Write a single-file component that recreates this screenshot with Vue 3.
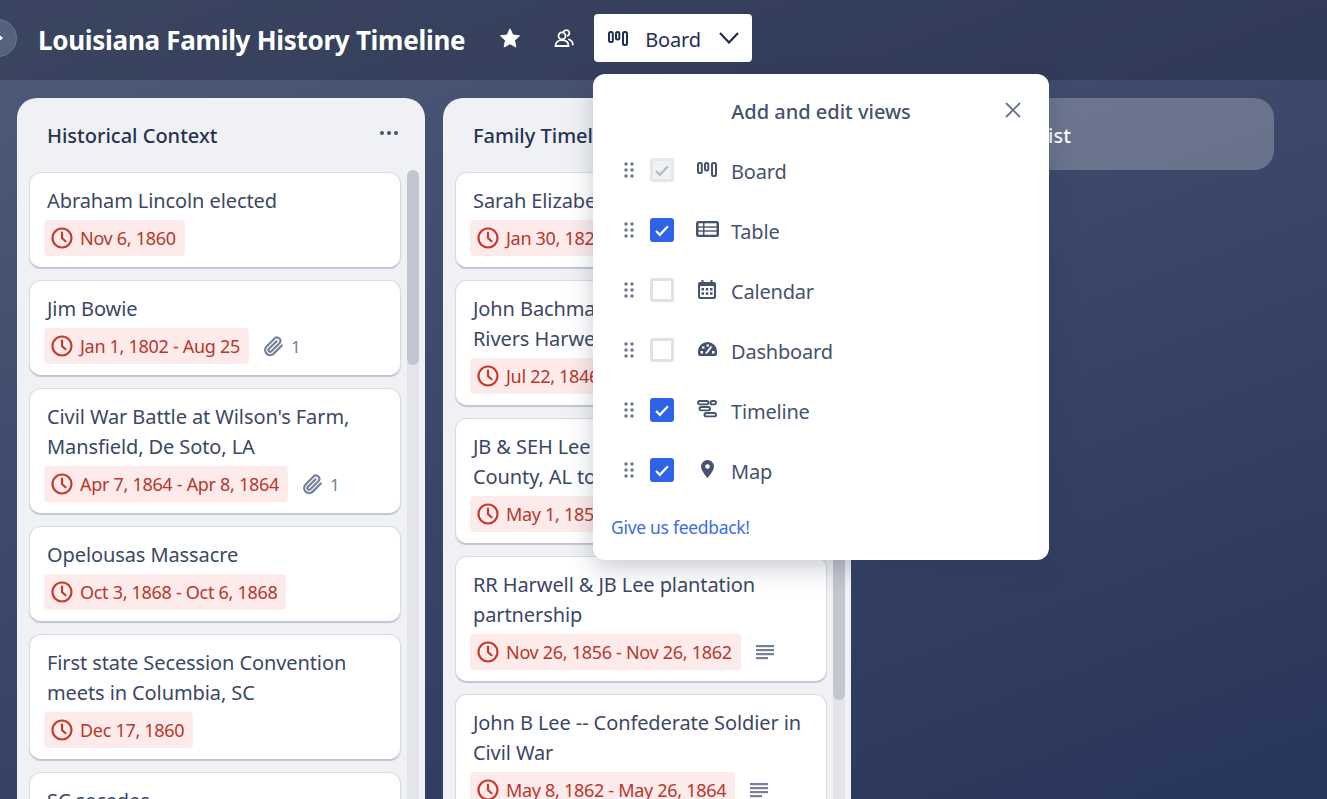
<script setup>
const clock = 'M12 2.500a9.500 9.500 0 1 0 0 19 9.500 9.500 0 0 0 0-19Z M12 6.500V12l3.500 3.200'
const col1 = [
  { t: ['Abraham Lincoln elected'], d: 'Nov 6, 1860' },
  { t: ['Jim Bowie'], d: 'Jan 1, 1802 - Aug 25', clip: 1 },
  { t: ["Civil War Battle at Wilson's Farm,", 'Mansfield, De Soto, LA'], d: 'Apr 7, 1864 - Apr 8, 1864', clip: 1 },
  { t: ['Opelousas Massacre'], d: 'Oct 3, 1868 - Oct 6, 1868' },
  { t: ['First state Secession Convention', 'meets in Columbia, SC'], d: 'Dec 17, 1860' },
  { t: ['SC secedes'], d: 'Dec 20, 1860' }
]
const col2 = [
  { t: ['Sarah Elizabeth Rivers born'], d: 'Jan 30, 1825' },
  { t: ['John Bachman Lee marries Sarah', 'Rivers Harwell'], d: 'Jul 22, 1846' },
  { t: ['JB & SEH Lee move from Madison', 'County, AL to Louisiana'], d: 'May 1, 1850' },
  { t: ['RR Harwell & JB Lee plantation', 'partnership'], d: 'Nov 26, 1856 - Nov 26, 1862', note: 1 },
  { t: ['John B Lee -- Confederate Soldier in', 'Civil War'], d: 'May 8, 1862 - May 26, 1864', note: 1 }
]
const lists = [
  { title: 'Historical Context', cards: col1, thumb: 195 },
  { title: 'Family Timeline', cards: col2, thumb: 530 }
]
const views = [
  { n: 'Board', c: 'locked' },
  { n: 'Table', c: 'on' },
  { n: 'Calendar', c: 'off' },
  { n: 'Dashboard', c: 'off' },
  { n: 'Timeline', c: 'on' },
  { n: 'Map', c: 'on' }
]
</script>

<template>
  <div class="page">
    <header class="top">
      <span class="toggle">
        <svg width="10" height="10" viewBox="0 0 10 10"><path d="M4 1l5 4-5 4z" fill="#fff" stroke="#fff" stroke-width="1.500" stroke-linejoin="round" /></svg>
      </span>
      <h1>Louisiana Family History Timeline</h1>
      <svg class="star" width="22" height="22" viewBox="0 0 24 24"><path fill="#fff" stroke="#fff" stroke-width="1" stroke-linejoin="round" d="M12 2l3.100 6.700 7.300.9-5.400 5 1.400 7.300-6.400-3.600-6.400 3.600 1.400-7.300-5.400-5 7.300-.9z" /></svg>
      <svg class="people" width="20" height="18" viewBox="0 0 20 18" fill="none" stroke="#fff" stroke-width="1.800" stroke-linecap="round"><circle cx="8" cy="6.800" r="3.500" /><path d="M1.500 17c0-3.800 2.800-5.800 6.500-5.800s6.500 2 6.500 5.800z" /><path d="M9.500 2.500C11 .6 14 .6 15 2.600c.7 1.600.1 3.300-1.300 4.200M15 10.500c2.200.8 3.800 2.500 3.800 5" /></svg>
      <button class="viewbtn">
        <svg width="20" height="15" viewBox="0 0 20 15" fill="none" stroke="#222f55" stroke-width="2"><rect x="1" y="1" width="3.800" height="10" rx="1.500" /><rect x="8" y="1" width="3.300" height="7.500" rx="1.500" /><rect x="15" y="1" width="4" height="13" rx="1.500" /></svg>
        <span>Board</span>
        <svg class="chev" width="20" height="12" viewBox="0 0 20 12"><path d="M1 1l9 9.500L19 1" fill="none" stroke="#222f55" stroke-width="2.200" /></svg>
      </button>
    </header>

    <main class="board">
      <section v-for="l in lists" :key="l.title" class="list">
        <div class="list-head">
          <h2>{{ l.title }}</h2>
          <svg width="20" height="6" viewBox="0 0 20 6" fill="#47526f"><circle cx="3" cy="3" r="2" /><circle cx="10" cy="3" r="2" /><circle cx="17" cy="3" r="2" /></svg>
        </div>
        <div class="cards">
          <article v-for="c in l.cards" :key="c.t[0]" class="card">
            <p class="ctitle"><span v-for="line in c.t" :key="line" class="line">{{ line }}</span></p>
            <div class="meta">
              <span class="due">
                <svg width="24" height="24" viewBox="0 0 24 24" fill="none" stroke="#c53a2e" stroke-width="2.200" stroke-linecap="round"><path :d="clock" /></svg>
                {{ c.d }}
              </span>
              <span v-if="c.clip" class="clip">
                <svg width="22" height="22" viewBox="0 0 24 24" fill="none" stroke="#77809a" stroke-width="2.400" stroke-linecap="round"><path d="M20.500 11.500l-8.800 8.800a5.500 5.500 0 0 1-7.800-7.800l9-9a3.700 3.700 0 0 1 5.200 5.200l-9 9a1.800 1.800 0 0 1-2.600-2.600l8.300-8.300" /></svg>
                <span>1</span>
              </span>
              <svg v-if="c.note" class="note" width="20" height="16" viewBox="0 0 20 16" fill="#77809a"><rect x="1" y="1" width="18" height="2.200" /><rect x="1" y="5" width="18" height="2.200" /><rect x="1" y="9" width="18" height="2.200" /><rect x="1" y="13" width="12" height="2.200" /></svg>
            </div>
          </article>
        </div>
        <span class="track"><span class="thumb" :style="{ height: l.thumb + 'px' }"></span></span>
      </section>
      <div class="addlist">Add another list</div>
    </main>

    <aside class="pop">
      <div class="pop-head">
        <h3>Add and edit views</h3>
        <svg class="close" width="16" height="16" viewBox="0 0 16 16"><path d="M1 1l14 14M15 1L1 15" stroke="#68728c" stroke-width="1.800" fill="none" /></svg>
      </div>
      <ul class="rows">
        <li v-for="v in views" :key="v.n" class="row">
          <svg class="grip" width="10" height="16" viewBox="0 0 10 16" fill="#6b7590"><circle cx="2" cy="2" r="1.700" /><circle cx="8" cy="2" r="1.700" /><circle cx="2" cy="8" r="1.700" /><circle cx="8" cy="8" r="1.700" /><circle cx="2" cy="14" r="1.700" /><circle cx="8" cy="14" r="1.700" /></svg>
          <span class="box" :class="v.c">
            <svg v-if="v.c !== 'off'" width="16" height="13" viewBox="0 0 14 12"><path d="M1.500 6.500l3.500 3.500 7.500-8" fill="none" :stroke="v.c === 'on' ? '#fff' : '#b4b9c7'" stroke-width="2" /></svg>
          </span>
          <span class="vicon">
            <svg v-if="v.n === 'Board'" width="22" height="15" viewBox="0 0 22 15" fill="none" stroke="#47526f" stroke-width="2"><rect x="2" y="1" width="3.800" height="10" rx="1.500" /><rect x="9" y="1" width="3.300" height="7.500" rx="1.500" /><rect x="16" y="1" width="4" height="13" rx="1.500" /></svg>
            <svg v-else-if="v.n === 'Table'" width="23" height="16" viewBox="0 0 23 16"><rect width="23" height="16" rx="2.500" fill="#47526f" /><g fill="#fff"><rect x="2.500" y="2.300" width="4.500" height="3" /><rect x="8.500" y="2.300" width="12" height="3" /><rect x="2.500" y="6.700" width="4.500" height="2.600" /><rect x="8.500" y="6.700" width="12" height="2.600" /><rect x="2.500" y="10.700" width="4.500" height="3" /><rect x="8.500" y="10.700" width="12" height="3" /></g></svg>
            <svg v-else-if="v.n === 'Calendar'" width="18" height="19" viewBox="0 0 18 19"><path d="M3.500 0h2v2h7V0h2v2H16a2 2 0 0 1 2 2v13a2 2 0 0 1-2 2H2a2 2 0 0 1-2-2V4a2 2 0 0 1 2-2h1.500z" fill="#47526f" /><rect x="2" y="6" width="14" height="11" rx="1" fill="#fff" /><g fill="#47526f"><rect x="3.500" y="8" width="2.500" height="2.500" /><rect x="7.800" y="8" width="2.500" height="2.500" /><rect x="12" y="8" width="2.500" height="2.500" /><rect x="3.500" y="12.300" width="2.500" height="2.500" /><rect x="7.800" y="12.300" width="2.500" height="2.500" /><rect x="12" y="12.300" width="2.500" height="2.500" /></g></svg>
            <svg v-else-if="v.n === 'Dashboard'" width="19" height="14" viewBox="0 0 19 14"><path d="M9.500 0A9.500 9.500 0 0 1 19 9.500V12a2 2 0 0 1-2 2H2a2 2 0 0 1-2-2V9.500A9.500 9.500 0 0 1 9.500 0z" fill="#47526f" /><path d="M4 4.500h2.500v2H4zM8.500 2.500H11v2H8.500zM2.500 9h2.500v2.500H2.500zM14 9h2.500v2.500H14z" fill="#fff" /><path d="M8 11.500L13.500 4.500" stroke="#fff" stroke-width="2" /></svg>
            <svg v-else-if="v.n === 'Timeline'" width="20" height="18" viewBox="0 0 20 18" fill="none" stroke="#47526f" stroke-width="1.900"><rect x="1" y="1" width="10.500" height="3.400" rx="1.700" /><rect x="13.500" y="1" width="5.500" height="3.400" rx="1.700" /><rect x="2.500" y="7" width="10.500" height="3.400" rx="1.700" /><rect x="7.500" y="13" width="11.500" height="3.400" rx="1.700" /></svg>
            <svg v-else width="13" height="18" viewBox="0 0 13 18"><path d="M6.500 0A6.500 6.500 0 0 1 13 6.500C13 11 6.500 18 6.500 18S0 11 0 6.500A6.500 6.500 0 0 1 6.500 0z" fill="#47526f" /><circle cx="6.500" cy="6.500" r="2.300" fill="#fff" /></svg>
          </span>
          <span class="vname">{{ v.n }}</span>
        </li>
      </ul>
      <a class="fb">Give us feedback!</a>
    </aside>
  </div>
</template>

<style>
html, body { margin: 0; overflow: hidden; }
</style>

<style scoped>
.page {
  position: relative;
  width: 1327px;
  height: 799px;
  overflow: hidden;
  font-family: "Noto Sans", "Open Sans", sans-serif;
  color: #2f3a5a;
  background: linear-gradient(160deg, #4f5c7a 0%, #3d4a6b 40%, #28355a 100%);
}
.top {
  height: 80px;
  box-sizing: border-box;
  background: rgba(30, 38, 62, 0.42);
  display: flex;
  align-items: center;
  padding-left: 38px;
  position: relative;
}
.toggle {
  position: absolute;
  left: -21px;
  top: 19px;
  width: 38px;
  height: 38px;
  box-sizing: border-box;
  border-radius: 50%;
  border: 1px solid #6b7590;
  background: #56617e;
  display: flex;
  align-items: center;
  justify-content: center;
}
h1 {
  margin: 0;
  font-size: 26px;
  font-weight: 700;
  color: #fff;
  letter-spacing: -0.28px;
  white-space: nowrap;
}
.star { margin-left: 34px; margin-top: -4px; }
.people { margin-left: 33px; margin-top: -4px; }
.viewbtn {
  margin-left: 20px;
  margin-top: -4px;
  width: 158px;
  height: 48px;
  border: 0;
  border-radius: 4px;
  background: #fff;
  display: flex;
  align-items: center;
  padding: 0 13px 0 14px;
  font: 20px "Noto Sans", sans-serif;
  color: #222f55;
}
.viewbtn span { margin-left: 17px; flex: 1; text-align: left; letter-spacing: -0.2px; padding-top: 2px; }
.board {
  display: flex;
  align-items: flex-start;
  gap: 18px;
  padding: 18px 0 0 17px;
}
.list {
  position: relative;
  width: 408px;
  height: 760px;
  flex: none;
  background: #f0f1f4;
  border-radius: 20px 20px 0 0;
  overflow: hidden;
  box-sizing: border-box;
  padding: 0 24px 0 12px;
}
.list-head {
  height: 74px;
  display: flex;
  align-items: center;
  justify-content: space-between;
  padding-right: 2px;
}
.list-head svg { margin-top: -4px; }
h2 {
  margin: 0 0 -1px 18px;
  font-size: 20px;
  font-weight: 500;
  color: #26324f;
  letter-spacing: 0;
  white-space: nowrap;
}
.cards { display: flex; flex-direction: column; gap: 12px; }
.card {
  background: #fff;
  border: 1px solid #d9dbe3;
  border-bottom-color: #bfc3d0;
  border-radius: 12px;
  box-shadow: 0 1px 1px rgba(90, 100, 130, 0.3);
  padding: 13px 14px 11px;
  box-sizing: border-box;
}
.ctitle {
  margin: 0;
  padding-left: 3px;
  font-size: 20px;
  line-height: 30px;
  color: #3c4765;
  letter-spacing: -0.1px;
  white-space: nowrap;
}
.line { display: block; }
.meta { display: flex; align-items: center; margin-top: 4px; height: 36px; }
.due {
  display: inline-flex;
  align-items: center;
  gap: 6px;
  height: 36px;
  box-sizing: border-box;
  padding: 0 9px 0 6px;
  border-radius: 4px;
  background: #fcebea;
  color: #b8372c;
  font-size: 18px;
  letter-spacing: -0.3px;
  white-space: nowrap;
}
.clip {
  display: inline-flex;
  align-items: center;
  gap: 6px;
  margin-left: 14px;
  font-size: 17px;
  color: #77809a;
}
.note { margin-left: 14px; }
.track {
  position: absolute;
  left: 390px;
  top: 72px;
  width: 12px;
  bottom: 0;
  border-radius: 6px;
  background: #e4e5ea;
}
.thumb { display: block; border-radius: 6px; background: #c3c6d0; }
.addlist {
  flex: none;
  width: 405px;
  height: 72px;
  box-sizing: border-box;
  padding: 0 30px 0 49px;
  line-height: 76px;
  border-radius: 20px;
  background: rgba(255, 255, 255, 0.24);
  color: #fff;
  font-size: 20px;
  font-weight: 500;
  letter-spacing: 0;
}
.pop {
  position: absolute;
  left: 593px;
  top: 74px;
  width: 456px;
  height: 486px;
  box-sizing: border-box;
  background: #fff;
  border-radius: 12px;
  box-shadow: 0 8px 24px rgba(40, 50, 80, 0.25);
  padding: 0 18px;
}
.pop-head {
  height: 67px;
  position: relative;
  display: flex;
  align-items: center;
  justify-content: center;
}
h3 {
  margin: 7px 0 0;
  font-size: 20px;
  font-weight: 500;
  color: #47526f;
  letter-spacing: 0;
}
.close { position: absolute; right: 10px; top: 28px; }
.rows { list-style: none; margin: 0; padding: 0; }
.row { height: 60px; display: flex; align-items: center; }
.grip { margin-left: 13px; margin-top: -2px; }
.box {
  margin-left: 16px;
  width: 24px;
  height: 24px;
  box-sizing: border-box;
  border-radius: 3px;
  display: flex;
  align-items: center;
  justify-content: center;
  margin-top: -2px;
}
.box.on { background: #2f63e6; }
.box.off { border: 3px solid #dfe1e8; }
.box.locked { background: #f1f2f5; border: 3px solid #e6e7ec; }
.vicon { width: 24px; margin-left: 21px; display: flex; justify-content: center; margin-top: -4px; }
.vname { margin-left: 12px; font-size: 20px; color: #47526f; letter-spacing: -0.2px; }
.fb {
  display: block;
  margin-top: 14px;
  font-size: 17.500px;
  color: #3a6ee8;
  letter-spacing: -0.3px;
}
</style>
